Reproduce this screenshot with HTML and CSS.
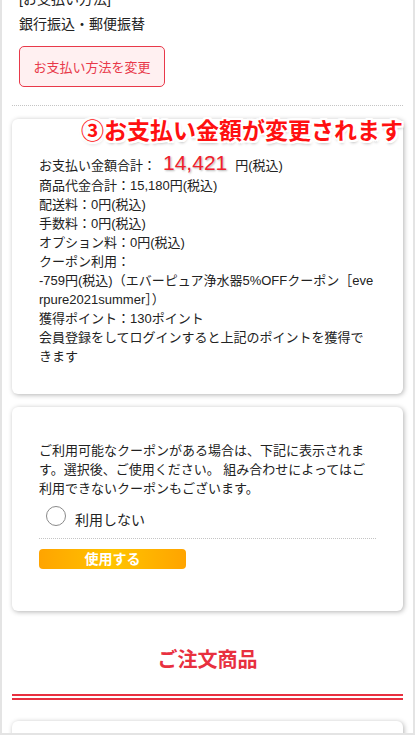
FILE: index.html
```html
<!DOCTYPE html>
<html lang="ja">
<head>
<meta charset="utf-8">
<title>お支払い</title>
<link rel="stylesheet" href="styles.css">
</head>
<body>
<div class="frame">
  <div class="inner">
    <section class="method">
      <p class="method-label">[お支払い方法]</p>
      <p class="method-value">銀行振込・郵便振替</p>
      <button class="change-btn" type="button">お支払い方法を変更</button>
    </section>
    <hr class="dotted">
    <section class="card card-total">
      <div class="annotation">③お支払い金額が変更されます</div>
      <div class="total-row">
        <span class="total-label">お支払い金額合計：</span>
        <span class="total-num">14,421</span>
        <span class="total-unit">円(税込)</span>
      </div>
      <p class="line">商品代金合計：15,180円(税込)</p>
      <p class="line">配送料：0円(税込)</p>
      <p class="line">手数料：0円(税込)</p>
      <p class="line">オプション料：0円(税込)</p>
      <p class="line">クーポン利用：</p>
      <p class="line">-759円(税込)（エバーピュア浄水器5%OFFクーポン［everpure2021summer］）</p>
      <p class="line">獲得ポイント：130ポイント</p>
      <p class="line">会員登録をしてログインすると上記のポイントを獲得できます</p>
    </section>
    <section class="card card-coupon">
      <p class="line">ご利用可能なクーポンがある場合は、下記に表示されます。選択後、ご使用ください。 組み合わせによってはご利用できないクーポンもございます。</p>
      <label class="radio-row">
        <span class="radio"></span>
        <span class="radio-text">利用しない</span>
      </label>
      <hr class="dotted inset">
      <button class="use-btn" type="button">使用する</button>
    </section>
    <h2 class="heading">ご注文商品</h2>
    <div class="double-line"></div>
    <section class="card card-items"></section>
  </div>
</div>
</body>
</html>
```

FILE: styles.css
```css
* { box-sizing: border-box; }
html, body { margin: 0; padding: 0; background: #fff; }
body {
  font-family: "Liberation Sans", "Noto Sans CJK JP", sans-serif;
  color: #222;
}
.frame {
  width: 415px;
  height: 735px;
  border: 2px solid #e4e4e4;
  border-top: none;
  overflow: hidden;
}
.inner {
  padding: 0 10px;
  margin-top: -11px;
}
p { margin: 0; }
.method { padding: 0 7px; }
.method-label, .method-value {
  font-size: 14px;
  line-height: 20px;
}
.method-value { margin-top: 5px; }
.change-btn {
  display: block;
  margin-top: 12px;
  width: 146px;
  height: 41px;
  padding: 0;
  border: 1px solid #e8394a;
  border-radius: 5px;
  background: #fff0f1;
  color: #e8394a;
  font-family: inherit;
  font-size: 13px;
}
.dotted {
  border: none;
  border-top: 1px dotted #c4c4c4;
  margin: 18px 0 0;
  height: 0;
}
.card {
  position: relative;
  background: #fff;
  border-radius: 6px;
  box-shadow: 1px 1px 5px rgba(0,0,0,0.3);
  padding: 0 27px;
  font-size: 13px;
  word-break: break-all;
}
.line { line-height: 19px; }
.card-total {
  margin-top: 13px;
  padding-top: 31px;
  padding-bottom: 28px;
}
.annotation {
  position: absolute;
  right: 0;
  top: -5px;
  font-size: 23px;
  line-height: 30px;
  font-weight: bold;
  font-family: "Noto Sans CJK JP", sans-serif;
  color: #ff1010;
  text-shadow:
    2px 0 0 #fff, -2px 0 0 #fff, 0 2px 0 #fff, 0 -2px 0 #fff,
    2px 2px 0 #fff, -2px -2px 0 #fff, 2px -2px 0 #fff, -2px 2px 0 #fff,
    1px 3px 3px rgba(0,0,0,0.25);
  white-space: nowrap;
}
.total-row {
  display: flex;
  align-items: baseline;
  line-height: 26px;
  height: 26px;
}
.total-num {
  font-size: 21px;
  color: #f0202c;
  margin: 0 8px 0 7px;
  text-shadow: 1px 1px 2px rgba(0,0,0,0.3);
}
.card-coupon {
  margin-top: 13px;
  padding-top: 34px;
  padding-bottom: 42px;
}
.radio-row {
  display: flex;
  align-items: center;
  margin-top: 6px;
  padding-left: 7px;
  height: 24px;
}
.radio {
  width: 20px;
  height: 20px;
  border: 1.5px solid #8a8a8a;
  border-radius: 50%;
  flex: none;
}
.radio-text {
  font-size: 14px;
  margin-left: 9px;
  margin-top: 6px;
}
.dotted.inset { margin-top: 10px; }
.use-btn {
  display: block;
  margin-top: 10px;
  width: 147px;
  height: 20px;
  padding: 0;
  border: none;
  border-radius: 4px;
  background: linear-gradient(to right, #ffa400, #ffc300 50%, #ffa400);
  color: #fff;
  font-family: inherit;
  font-weight: bold;
  font-size: 14px;
  line-height: 20px;
}
.heading {
  margin: 35px 0 0;
  text-align: center;
  font-size: 20px;
  line-height: 28px;
  color: #e8303f;
  font-weight: bold;
}
.double-line {
  margin-top: 20px;
  height: 6px;
  border-top: 2px solid #e8303f;
  border-bottom: 2px solid #e8303f;
}
.card-items {
  margin-top: 21px;
  height: 80px;
}
```
